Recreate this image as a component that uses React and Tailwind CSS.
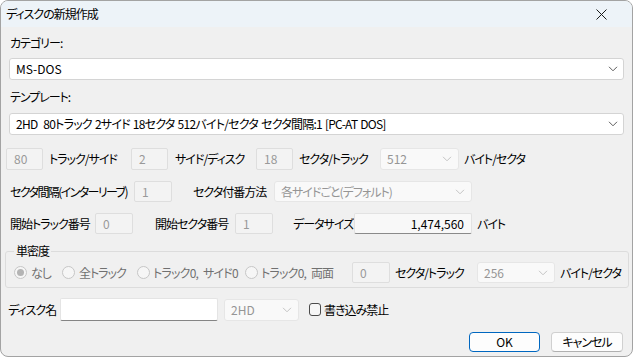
import React from 'react'

const font = { fontFamily: '"Noto Sans CJK JP", "Noto Sans", sans-serif' }

function Chevron({ light }) {
  return (
    <svg width="10" height="6" viewBox="0 0 10 6" className="shrink-0">
      <path d="M1 0.8l4 4 4-4" fill="none" stroke={light ? '#c4c4c4' : '#5c5c5c'} strokeWidth="1" />
    </svg>
  )
}

function Combo({ className, children }) {
  return (
    <div className={`flex items-center justify-between bg-white border border-[#d4d4d4] rounded-[3px] pl-[6px] pr-[5px] text-[12px] text-black ${className}`}>
      <span className="whitespace-pre">{children}</span>
      <Chevron />
    </div>
  )
}

function DisSelect({ className, children }) {
  return (
    <div className={`flex items-center justify-between bg-[#f9f9f9] border border-[#e6e6e6] rounded-[3px] pl-[6px] pr-[6px] text-[12px] text-[#959595] ${className}`}>
      <span className="whitespace-nowrap">{children}</span>
      <Chevron light />
    </div>
  )
}

function DisInput({ className, children }) {
  return (
    <div className={`flex items-center bg-[#f3f3f3] border border-[#dedede] rounded-[2px] pl-[7px] text-[12px] text-[#999999] tracking-normal shrink-0 ${className}`}>
      {children}
    </div>
  )
}

function Label({ className, children, dim }) {
  return (
    <div className={`whitespace-pre text-[12px] shrink-0 ${dim ? 'text-[#707070]' : 'text-black'} ${className}`}>{children}</div>
  )
}

function Radio({ checked, className = '' }) {
  return (
    <div className={`w-[13px] h-[13px] rounded-full border border-[#c6c6c6] bg-[#f6f6f6] flex items-center justify-center shrink-0 ${className}`}>
      {checked && <div className="w-[7px] h-[7px] rounded-full bg-[#b4b4b4]" />}
    </div>
  )
}

export default function App() {
  return (
    <div className="w-[634px] h-[358px] bg-white" style={font}>
      <div className="w-[633px] h-[357px] border border-[#a3a3a3] rounded-[8px] overflow-hidden bg-[#f0f0f0] flex flex-col [font-feature-settings:'palt'] tracking-[-1px]">
        {/* title bar */}
        <div className="h-[26px] shrink-0 bg-[#edf3f8] flex items-center justify-between">
          <span className="ml-[5px] text-[12px] text-black">ディスクの新規作成</span>
          <svg width="11" height="11" viewBox="0 0 11 11" className="mr-[25px]">
            <path d="M0.5 0.5l10 10M10.5 0.5l-10 10" stroke="#1a1a1a" strokeWidth="1" />
          </svg>
        </div>

        <div className="mt-[8px] h-[16px] leading-[16px] ml-[9px] text-[12px]">カテゴリー:</div>
        <Combo className="mt-[7px] h-[22px] ml-[8px] w-[615px] tracking-normal">MS-DOS</Combo>

        <div className="mt-[9px] h-[16px] leading-[16px] ml-[9px] text-[12px]">テンプレート:</div>
        <Combo className="mt-[8px] h-[22px] ml-[8px] w-[615px] tracking-[-0.75px] [word-spacing:1px]">{'2HD  80トラック 2サイド 18セクタ 512バイト/セクタ セクタ間隔:1 [PC-AT DOS]'}</Combo>

        {/* row 1 */}
        <div className="mt-[13px] h-[22px] flex items-center">
          <DisInput className="ml-[5px] w-[37px] h-[22px]">80</DisInput>
          <Label className="ml-[6px] w-[82px]">トラック/サイド</Label>
          <DisInput className="w-[37px] h-[22px]">2</DisInput>
          <Label className="ml-[7px] w-[81px]">サイド/ディスク</Label>
          <DisInput className="w-[37px] h-[22px]">18</DisInput>
          <Label className="ml-[6px] w-[81px]">セクタ/トラック</Label>
          <DisSelect className="w-[79px] h-[22px] tracking-normal">512</DisSelect>
          <Label className="ml-[5px]">バイト/セクタ</Label>
        </div>

        {/* row 2 */}
        <div className="mt-[11px] h-[21px] flex items-center">
          <Label className="ml-[9px] w-[124px] tracking-[-1.6px]">セクタ間隔(インターリーブ)</Label>
          <DisInput className="w-[38px] h-[21px]">1</DisInput>
          <Label className="ml-[21px] w-[81px]">セクタ付番方法</Label>
          <DisSelect className="w-[198px] h-[21px]">各サイドごと(デフォルト)</DisSelect>
        </div>

        {/* row 3 */}
        <div className="mt-[11px] h-[21px] flex items-center">
          <Label className="ml-[9px] w-[85px]">開始トラック番号</Label>
          <DisInput className="w-[38px] h-[21px]">0</DisInput>
          <Label className="ml-[22px] w-[80px]">開始セクタ番号</Label>
          <DisInput className="w-[38px] h-[21px]">1</DisInput>
          <Label className="ml-[20px] w-[61px]">データサイズ</Label>
          <div className="w-[118px] h-[21px] bg-[#f8f8f8] border border-[#e2e2e2] border-b-[#8a8a8a] rounded-[2px] flex items-center justify-end pr-[7px] text-[12px] tracking-normal text-black">1,474,560</div>
          <Label className="ml-[5px]">バイト</Label>
        </div>

        {/* group box */}
        <div className="relative mt-[17px] ml-[4px] w-[624px] h-[37px] border border-[#dcdcdc] rounded-[3px]">
          <span className="absolute left-[8px] top-[-9px] px-[2px] bg-[#f0f0f0] text-[12px] leading-[16px] text-black">単密度</span>
          <div className="mt-[10px] h-[21px] flex items-center">
            <Radio checked className="ml-[8px]" />
            <Label dim className="ml-[4px] w-[31px]">なし</Label>
            <Radio />
            <Label dim className="ml-[4px] w-[58px]">全トラック</Label>
            <Radio />
            <Label dim className="ml-[3px] w-[92px] tracking-[-0.8px] [word-spacing:3px]">トラック0, サイド0</Label>
            <Radio />
            <Label dim className="ml-[3px] w-[91px] tracking-[-0.8px] [word-spacing:3px]">トラック0, 両面</Label>
            <DisInput className="w-[38px] h-[21px]">0</DisInput>
            <Label className="ml-[5px] w-[82px]">セクタ/トラック</Label>
            <DisSelect className="w-[78px] h-[21px] tracking-normal">256</DisSelect>
            <Label className="ml-[5px]">バイト/セクタ</Label>
          </div>
        </div>

        {/* disk name row */}
        <div className="mt-[10px] h-[23px] flex items-center">
          <Label className="ml-[7px] w-[52px]">ディスク名</Label>
          <div className="w-[158px] h-[23px] bg-white border border-[#e4e4e4] border-b-[#858585] rounded-[2px]" />
          <DisSelect className="ml-[6px] w-[75px] h-[22px] tracking-normal">2HD</DisSelect>
          <div className="ml-[10px] w-[12px] h-[13px] border border-[#4a4a4a] rounded-[3px] bg-[#f6f6f6]" />
          <Label className="ml-[3px]">書き込み禁止</Label>
        </div>

        {/* buttons */}
        <div className="mt-[11px] h-[20px] flex items-center">
          <div className="ml-[468px] w-[71px] h-[20px] bg-[#fdfdfd] border border-[#0067c0] rounded-[4px] flex items-center justify-center text-[12px] tracking-normal text-black">OK</div>
          <div className="ml-[11px] w-[72px] h-[20px] bg-[#fdfdfd] border border-[#d0d0d0] border-b-[#b0b0b0] rounded-[4px] flex items-center justify-center text-[12px] text-black">キャンセル</div>
        </div>
      </div>
    </div>
  )
}
